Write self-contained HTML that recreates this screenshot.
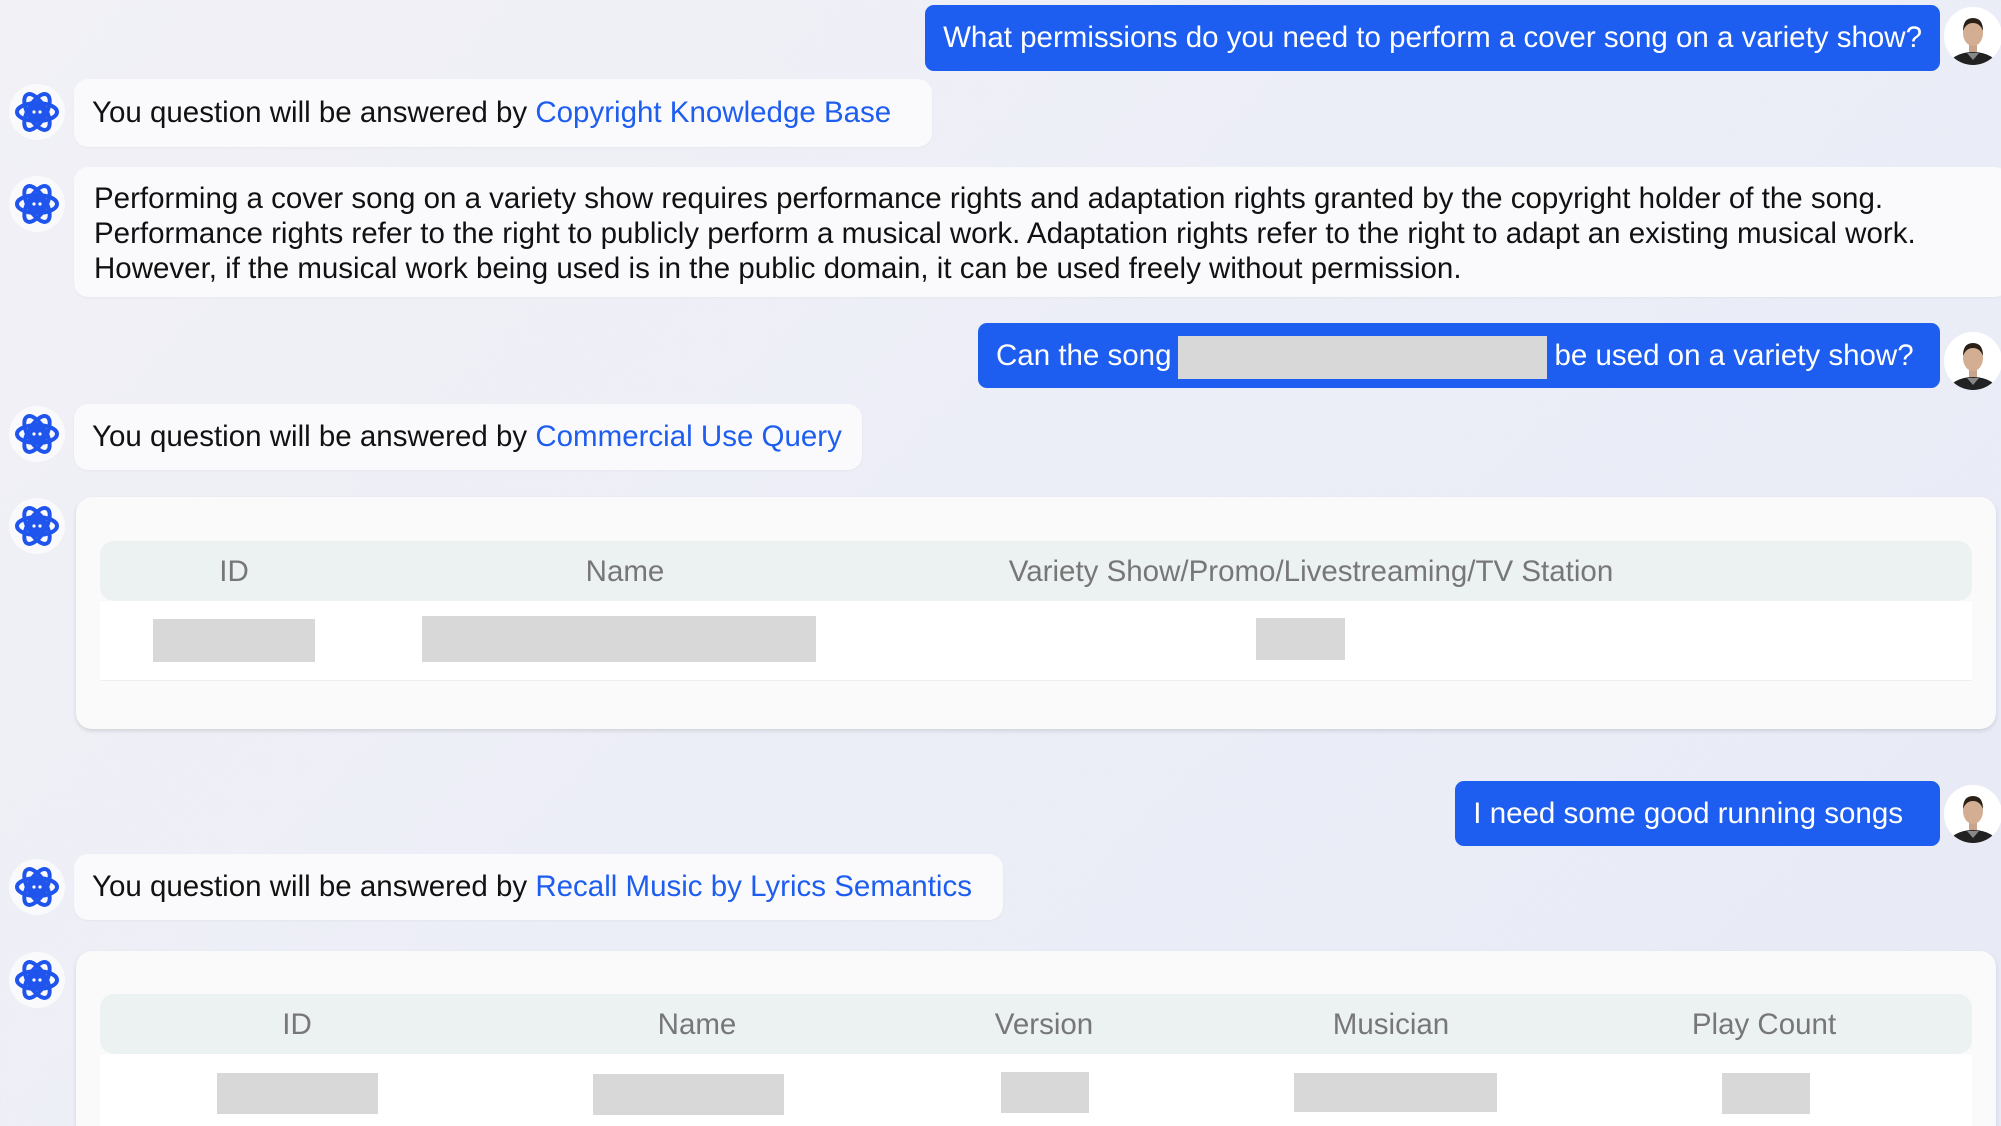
<!DOCTYPE html>
<html style="width:2001px;height:1126px;overflow:hidden"><head><meta charset="utf-8"><style>
*{margin:0;padding:0;box-sizing:border-box}
body{width:2001px;height:1126px;overflow:hidden;position:relative;font-family:"Liberation Sans",Arial,sans-serif;background:linear-gradient(135deg,#f1f1f6 0%,#eceef7 50%,#e7eaf6 100%)}
.ub{position:absolute;right:61px;background:#1d5df0;color:#fff;border-radius:9px;font-size:29.5px;padding:0 18px;white-space:nowrap}
.bb{position:absolute;background:#fafafc;border-radius:14px;font-size:29.5px;color:#111;white-space:nowrap;box-shadow:0 1px 2px rgba(0,0,0,.04)}
.bb a{color:#1d5df0;text-decoration:none}
.ic{position:absolute;width:56px;height:56px;border-radius:50%;background:#fafafc}
.av{position:absolute;width:58px;height:58px;border-radius:50%;background:#fff;overflow:hidden}
.card{position:absolute;left:76px;width:1920px;background:#fafafb;border-radius:16px;box-shadow:0 2px 4px rgba(0,0,0,.12)}
.hd{position:absolute;left:24px;right:24px;height:60px;background:#ecf1f1;border-radius:14px;color:#777;font-size:29.5px}
.hd span{position:absolute;top:14px;transform:translateX(-50%);white-space:nowrap}
.row{position:absolute;left:24px;right:24px;background:#fff;border-bottom:1px solid #eee}
.g{position:absolute;background:#d8d8d8}
</style></head><body>
<svg width="0" height="0" style="position:absolute"><defs><g id="at"><g fill="none" stroke="#1f55ec" stroke-width="4"><ellipse cx="28" cy="28" rx="20" ry="9"/><ellipse cx="28" cy="28" rx="20" ry="9" transform="rotate(60 28 28)"/><ellipse cx="28" cy="28" rx="20" ry="9" transform="rotate(120 28 28)"/></g><circle cx="28" cy="28" r="8" fill="#1f55ec"/><circle cx="25" cy="28" r="1.6" fill="#fff"/><circle cx="31" cy="28" r="1.6" fill="#fff"/></g>
<g id="pp"><rect width="58" height="58" fill="#fff"/><ellipse cx="29" cy="60" rx="25" ry="15" fill="#222"/><path d="M23 46 L29 53 L35 46Z" fill="#888"/><rect x="25" y="34" width="8" height="11" fill="#c8a48a"/><ellipse cx="29" cy="26" rx="10" ry="13" fill="#d4ae92"/><path d="M19 24 Q19 11 29 11 Q39 11 39 24 Q36 16 29 16 Q22 16 19 24Z" fill="#2a2018"/></g></defs></svg>

<div class="ub" style="top:5px;height:66px;line-height:66px">What permissions do you need to perform a cover song on a variety show?</div>
<svg class="av" style="left:1944px;top:7px" viewBox="0 0 58 58"><use href="#pp"/></svg>

<svg class="ic" style="left:9px;top:84px" viewBox="0 0 56 56"><use href="#at"/></svg>
<div class="bb" style="left:74px;top:79px;width:858px;height:68px;line-height:68px;padding-left:18px">You question will be answered by <a>Copyright Knowledge Base</a></div>

<svg class="ic" style="left:9px;top:176px" viewBox="0 0 56 56"><use href="#at"/></svg>
<div class="bb" style="left:74px;top:167px;width:1935px;height:130px;padding:14px 0 0 20px;font-size:29.5px;line-height:35px">Performing a cover song on a variety show requires performance rights and adaptation rights granted by the copyright holder of the song.<br>Performance rights refer to the right to publicly perform a musical work. Adaptation rights refer to the right to adapt an existing musical work.<br>However, if the musical work being used is in the public domain, it can be used freely without permission.</div>

<div class="ub" style="top:323px;width:962px;height:65px;line-height:65px">Can the song<span style="display:inline-block;width:369px;height:43px;background:#d8d8d8;vertical-align:middle;margin:0 8px 0 6px"></span>be used on a variety show?</div>
<svg class="av" style="left:1944px;top:332px" viewBox="0 0 58 58"><use href="#pp"/></svg>

<svg class="ic" style="left:9px;top:406px" viewBox="0 0 56 56"><use href="#at"/></svg>
<div class="bb" style="left:74px;top:404px;width:788px;height:66px;line-height:66px;padding-left:18px">You question will be answered by <a>Commercial Use Query</a></div>

<svg class="ic" style="left:9px;top:498px" viewBox="0 0 56 56"><use href="#at"/></svg>
<div class="card" style="top:497px;height:232px">
<div class="hd" style="top:44px"><span style="left:134px">ID</span><span style="left:525px">Name</span><span style="left:1211px">Variety Show/Promo/Livestreaming/TV Station</span></div>
<div class="row" style="top:104px;height:80px"></div>
<div class="g" style="left:77px;top:122px;width:162px;height:43px"></div>
<div class="g" style="left:346px;top:119px;width:394px;height:46px"></div>
<div class="g" style="left:1180px;top:121px;width:89px;height:42px"></div>
</div>

<div class="ub" style="top:781px;height:65px;line-height:65px;padding:0 37px 0 18px">I need some good running songs</div>
<svg class="av" style="left:1944px;top:785px" viewBox="0 0 58 58"><use href="#pp"/></svg>

<svg class="ic" style="left:9px;top:859px" viewBox="0 0 56 56"><use href="#at"/></svg>
<div class="bb" style="left:74px;top:854px;width:929px;height:66px;line-height:66px;padding-left:18px">You question will be answered by <a>Recall Music by Lyrics Semantics</a></div>

<svg class="ic" style="left:9px;top:952px" viewBox="0 0 56 56"><use href="#at"/></svg>
<div class="card" style="top:951px;height:175px;border-radius:16px 16px 0 0">
<div class="hd" style="top:43px"><span style="left:197px">ID</span><span style="left:597px">Name</span><span style="left:944px">Version</span><span style="left:1291px">Musician</span><span style="left:1664px">Play Count</span></div>
<div class="row" style="top:103px;height:72px;border-bottom:none"></div>
<div class="g" style="left:141px;top:122px;width:161px;height:41px"></div>
<div class="g" style="left:517px;top:123px;width:191px;height:41px"></div>
<div class="g" style="left:925px;top:121px;width:88px;height:41px"></div>
<div class="g" style="left:1218px;top:122px;width:203px;height:39px"></div>
<div class="g" style="left:1646px;top:122px;width:88px;height:41px"></div>
</div>
</body></html>
